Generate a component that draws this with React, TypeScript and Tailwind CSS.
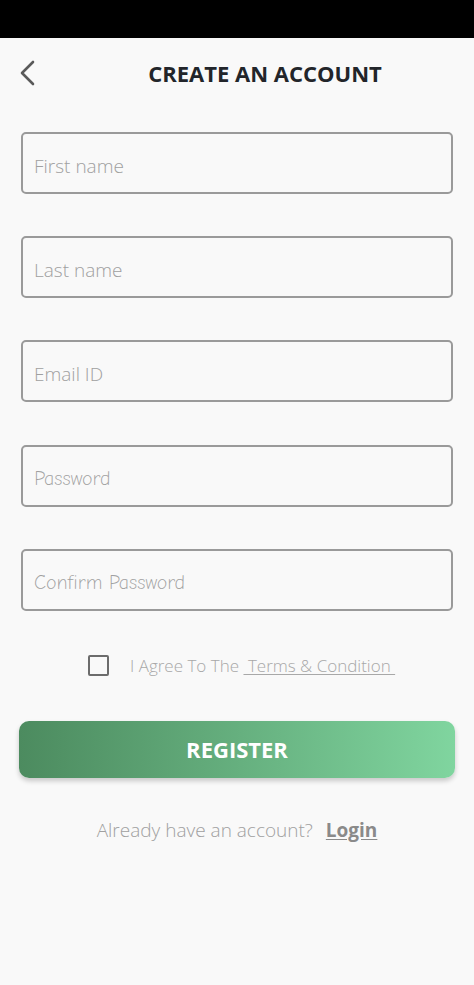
const fields = [
  { label: 'First name', hand: false, mt: 'mt-0' },
  { label: 'Last name', hand: false, mt: 'mt-[42px]' },
  { label: 'Email ID', hand: false, mt: 'mt-[42px]' },
  { label: 'Password', hand: true, mt: 'mt-[43px]' },
  { label: 'Confirm Password', hand: true, mt: 'mt-[42px]' },
];

export default function App() {
  return (
    <div
      className="min-h-[985px] w-[474px] bg-[#f9f9f9]"
      style={{ fontFamily: '"Open Sans", "Liberation Sans", sans-serif' }}
    >
      {/* status bar */}
      <div className="h-[38px] bg-black" />

      {/* header */}
      <div className="flex h-[70px] items-center">
        <button className="flex w-[56px] items-center pl-[17px]">
          <svg width="20" height="28" viewBox="0 0 20 28" fill="none">
            <path d="M16 3 L5 14 L16 25" stroke="#5a5a5a" strokeWidth="2.6" strokeLinecap="round" strokeLinejoin="round" />
          </svg>
        </button>
        <h1 className="flex-1 text-center text-[22px] font-bold text-[#22252a]">
          CREATE AN ACCOUNT
        </h1>
      </div>

      {/* form */}
      <div className="mt-[24px] flex flex-col px-[21px]">
        {fields.map((f) => (
          <div
            key={f.label}
            className={`${f.mt} flex h-[62px] items-center rounded-[5px] border-2 border-[#9a9a9a] px-[11px] pt-[6px]`}
          >
            <input
              placeholder={f.label}
              type={f.hand ? 'password' : 'text'}
              className={`w-full bg-transparent font-light text-[#444] outline-none placeholder:text-[#a0a0a0] ${
                f.hand ? 'text-[19.5px]' : 'text-[19px]'
              }`}
              style={f.hand ? { fontFamily: '"Comic Neue", "DejaVu Sans", sans-serif', fontWeight: 300 } : undefined}
            />
          </div>
        ))}

        {/* terms */}
        <div className="mt-[42px] flex items-center pl-[67px]">
          <span className="h-[21px] w-[21px] rounded-[2px] border-2 border-[#6c6c6c]" />
          <span className="ml-[21px] text-[17px] font-light text-[#a8a8a8]">
            I Agree To The{' '}
            <span className="underline underline-offset-2">&nbsp;Terms &amp; Condition&nbsp;</span>
          </span>
        </div>
      </div>

      {/* register */}
      <div className="mt-[42px] px-[19px]">
        <button className="flex h-[57px] w-full items-center justify-center rounded-[10px] bg-gradient-to-r from-[#4c8b5f] to-[#80d59f] text-[22px] font-bold text-white shadow-[0_3px_5px_rgba(0,0,0,0.2)]">
          REGISTER
        </button>
      </div>

      <div className="mt-[38px] flex items-center justify-center text-[19px]">
        <span className="font-light text-[#a0a0a0]">Already have an account?</span>
        <a className="ml-[13px] font-bold text-[#8a8a8a] underline underline-offset-2">Login</a>
      </div>
    </div>
  );
}
